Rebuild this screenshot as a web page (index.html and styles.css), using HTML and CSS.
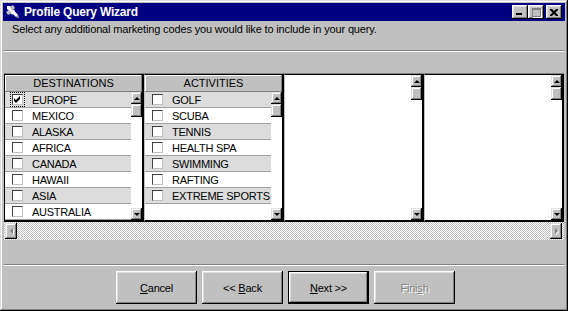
FILE: index.html
```html
<!DOCTYPE html>
<html lang="en">
<head>
    <meta charset="UTF-8">
    <title>Profile Query Wizard</title>
    <link rel="stylesheet" href="styles.css">
</head>
<body>
<div class="window">
    <div class="titlebar">
        <svg class="app-icon" width="16" height="16" viewBox="0 0 16 16">
            <path d="M2 2 L5 2 L13 11 L14 14 L11 13 L2 5 Z" fill="#fff"/>
            <path d="M6 9 L9 6 L10 7 L7 11 Z" fill="#fff"/>
            <path d="M1 8 L4 6 L7 9 L3 11 Z" fill="#c0c0c0"/>
            <path d="M8 1 L10 4 L7 7 L5 3 Z" fill="#c0c0c0"/>
            <path d="M11 13 L14 14 L13 11 Z" fill="#808080"/>
        </svg>
        <span class="title">Profile Query Wizard</span>
        <div class="caption-btns">
            <span class="cbtn"><i class="min-glyph"></i></span>
            <span class="cbtn"><i class="max-glyph"></i></span>
            <span class="cbtn close">
                <svg width="8" height="7" viewBox="0 0 8 7"><path d="M0 0h2l2 2 2-2h2v1L5.5 3.5 8 6v1H6L4 5 2 7H0V6l2.5-2.5L0 1z" fill="#000"/></svg>
            </span>
        </div>
    </div>
    <div class="content">
        <p class="intro">Select any additional marketing codes you would like to include in your query.</p>
        <div class="sep"></div>
        <div class="view">
            <div class="panels">
                <div class="panel">
                    <div class="head">DESTINATIONS</div>
                    <div class="panel-body">
                        <ul class="list">
                            <li><span class="check focus"><svg width="7" height="7" viewBox="0 0 7 7"><path d="M0 2 L2 4 L6 0 L6 3 L2 7 L0 5 Z" fill="#000"/></svg></span>EUROPE</li>
                            <li><span class="check"></span>MEXICO</li>
                            <li><span class="check"></span>ALASKA</li>
                            <li><span class="check"></span>AFRICA</li>
                            <li><span class="check"></span>CANADA</li>
                            <li><span class="check"></span>HAWAII</li>
                            <li><span class="check"></span>ASIA</li>
                            <li><span class="check"></span>AUSTRALIA</li>
                        </ul>
                        <div class="vscroll">
                            <span class="sbtn"><i class="arr up"></i></span>
                            <span class="sbtn thumb"></span>
                            <span class="track"></span>
                            <span class="sbtn"><i class="arr down"></i></span>
                        </div>
                    </div>
                </div>
                <div class="panel">
                    <div class="head">ACTIVITIES</div>
                    <div class="panel-body">
                        <ul class="list">
                            <li><span class="check"></span>GOLF</li>
                            <li><span class="check"></span>SCUBA</li>
                            <li><span class="check"></span>TENNIS</li>
                            <li><span class="check"></span>HEALTH SPA</li>
                            <li><span class="check"></span>SWIMMING</li>
                            <li><span class="check"></span>RAFTING</li>
                            <li><span class="check"></span>EXTREME SPORTS</li>
                        </ul>
                        <div class="vscroll">
                            <span class="sbtn"><i class="arr up"></i></span>
                            <span class="sbtn thumb"></span>
                            <span class="track"></span>
                            <span class="sbtn"><i class="arr down"></i></span>
                        </div>
                    </div>
                </div>
                <div class="panel">
                    <div class="panel-body">
                        <ul class="list"></ul>
                        <div class="vscroll">
                            <span class="sbtn"><i class="arr up"></i></span>
                            <span class="sbtn thumb"></span>
                            <span class="track"></span>
                            <span class="sbtn"><i class="arr down"></i></span>
                        </div>
                    </div>
                </div>
                <div class="panel">
                    <div class="panel-body">
                        <ul class="list"></ul>
                        <div class="vscroll">
                            <span class="sbtn"><i class="arr up"></i></span>
                            <span class="sbtn thumb"></span>
                            <span class="track"></span>
                            <span class="sbtn"><i class="arr down"></i></span>
                        </div>
                    </div>
                </div>
            </div>
            <div class="hscroll">
                <span class="sbtn wide"><i class="arr left"></i></span>
                <span class="track"></span>
                <span class="sbtn wide"><i class="arr right"></i></span>
            </div>
        </div>
        <div class="sep low"></div>
        <div class="buttons">
            <a class="btn"><span><u>C</u>ancel</span></a>
            <a class="btn"><span>&lt;&lt; <u>B</u>ack</span></a>
            <a class="btn default"><span><u>N</u>ext &gt;&gt;</span></a>
            <a class="btn disabled"><span>Fini<u>s</u>h</span></a>
        </div>
    </div>
</div>
</body>
</html>
```

FILE: styles.css
```css
body {
    margin: 0;
    font-family: "Liberation Sans", Arial, sans-serif;
    font-size: 11px;
    color: #000;
    background: #c0c0c0;
}
.window {
    width: 568px;
    height: 311px;
    box-sizing: border-box;
    padding: 3px;
    background: #c0c0c0;
    box-shadow: inset -1px -1px #000, inset 1px 1px #dfdfdf, inset -2px -2px #808080, inset 2px 2px #fff;
    display: flex;
    flex-direction: column;
}
.titlebar {
    height: 18px;
    background: #000080;
    color: #fff;
    display: flex;
    align-items: center;
    padding: 0 3px 0 2px;
}
.app-icon {
    margin-right: 3px;
}
.title {
    font-weight: bold;
    font-size: 12px;
    letter-spacing: -0.2px;
    flex: 1;
}
.caption-btns {
    display: flex;
}
.cbtn {
    width: 16px;
    height: 14px;
    box-sizing: border-box;
    background: #c0c0c0;
    box-shadow: inset -1px -1px #000, inset 1px 1px #fff, inset -2px -2px #808080, inset 2px 2px #dfdfdf;
    position: relative;
    display: flex;
    align-items: center;
    justify-content: center;
}
.cbtn.close {
    margin-left: 2px;
}
.min-glyph {
    position: absolute;
    left: 4px;
    top: 8px;
    width: 6px;
    height: 2px;
    background: #000;
}
.max-glyph {
    width: 9px;
    height: 9px;
    box-sizing: border-box;
    border: 1px solid #808080;
    border-top-width: 2px;
    box-shadow: 1px 1px #fff;
}
.content {
    flex: 1;
    padding: 0 1px;
}
.intro {
    margin: 1px 0 0;
    padding-left: 8px;
    line-height: 14px;
    letter-spacing: -0.15px;
}
.sep {
    margin-top: 14px;
    border-top: 1px solid #808080;
    border-bottom: 1px solid #fff;
}
.sep.low {
    margin-top: 24px;
}
.view {
    margin-top: 21px;
    width: 560px;
    border-top: 1px solid #808080;
    background: repeating-conic-gradient(#fff 0 25%, #c0c0c0 0 50%) 0 0 / 2px 2px;
}
.panels {
    display: flex;
}
.panel {
    width: 140px;
    height: 148px;
    box-sizing: border-box;
    border-top: 1px solid #000;
    border-left: 1px solid #c0c0c0;
    border-right: 2px solid #000;
    border-bottom: 2px solid #000;
    display: flex;
    flex-direction: column;
    background: #fff;
}
.panel:first-child {
    border-left-color: #000;
}
.head {
    height: 17px;
    line-height: 17px;
    text-align: center;
    background: #c0c0c0;
    box-shadow: inset -1px -1px #808080, inset 1px 1px #fff;
}
.panel-body {
    flex: 1;
    display: flex;
    min-height: 0;
}
.list {
    flex: 1;
    min-width: 0;
    margin: 0;
    padding: 0;
    list-style: none;
    overflow: hidden;
    background: #fff;
}
.list li {
    height: 15px;
    border-bottom: 1px solid #a0a0a0;
    display: flex;
    align-items: center;
    padding-left: 7px;
    white-space: nowrap;
    letter-spacing: -0.25px;
}
.list li:nth-child(odd) {
    background: #dcdcdc;
}
.check {
    width: 11px;
    height: 11px;
    box-sizing: border-box;
    margin-right: 9px;
    flex: none;
    background: #fff;
    border-top: 1px solid #404040;
    border-left: 1px solid #404040;
    border-right: 1px solid #c0c0c0;
    border-bottom: 1px solid #c0c0c0;
    display: flex;
    align-items: center;
    justify-content: center;
}
.check.focus {
    outline: 1px dotted #000;
    outline-offset: 1px;
}
.vscroll {
    width: 11px;
    display: flex;
    flex-direction: column;
}
.sbtn {
    width: 11px;
    height: 12px;
    flex: none;
    box-sizing: border-box;
    background: #c0c0c0;
    box-shadow: inset -1px -1px #000, inset 1px 1px #dfdfdf, inset -2px -2px #808080, inset 2px 2px #fff;
    display: flex;
    align-items: center;
    justify-content: center;
}
.sbtn.thumb {
    height: 13px;
}
.sbtn.wide {
    width: 12px;
    height: 16px;
}
.track {
    flex: 1;
}
.arr {
    width: 0;
    height: 0;
    border: 3px solid transparent;
}
.arr.up {
    border-top: 0;
    border-bottom-color: #000;
}
.arr.down {
    border-bottom: 0;
    border-top-color: #000;
}
.arr.left {
    border-left: 0;
    border-right-color: #808080;
    filter: drop-shadow(1px 1px #fff);
}
.arr.right {
    border-right: 0;
    border-left-color: #808080;
    filter: drop-shadow(1px 1px #fff);
}
.hscroll {
    height: 16px;
    padding: 1px 2px 1px 1px;
    display: flex;
}
.buttons {
    margin: 5px 0 0 112px;
    display: flex;
    gap: 5px;
}
.btn {
    width: 81px;
    height: 33px;
    box-sizing: border-box;
    display: flex;
    align-items: center;
    justify-content: center;
    background: #c0c0c0;
    box-shadow: inset -1px -1px #000, inset 1px 1px #fff, inset -2px -2px #808080, inset 2px 2px #dfdfdf;
    letter-spacing: -0.2px;
    white-space: pre;
}
.btn.default {
    border: 1px solid #000;
}
.btn.disabled {
    color: #808080;
    text-shadow: 1px 1px #fff;
}
```
